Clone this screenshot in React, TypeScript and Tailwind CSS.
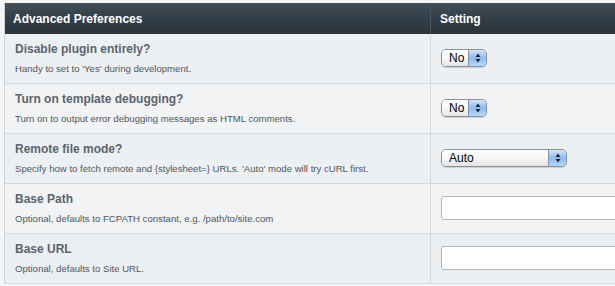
import React from "react";

interface IPrefRow {
    title: string,
    description: string,
    control: "yesno" | "auto" | "text",
    value?: string,
    shade: string
}

const rows: IPrefRow[] = [
    { title: "Disable plugin entirely?", description: "Handy to set to 'Yes' during development.", control: "yesno", value: "No", shade: "bg-[#edf0f2]" },
    { title: "Turn on template debugging?", description: "Turn on to output error debugging messages as HTML comments.", control: "yesno", value: "No", shade: "bg-[#f1f3f4]" },
    { title: "Remote file mode?", description: "Specify how to fetch remote and {stylesheet=} URLs. 'Auto' mode will try cURL first.", control: "auto", value: "Auto", shade: "bg-[#edf0f2]" },
    { title: "Base Path", description: "Optional, defaults to FCPATH constant, e.g. /path/to/site.com", control: "text", shade: "bg-[#f1f3f4]" },
    { title: "Base URL", description: "Optional, defaults to Site URL.", control: "text", shade: "bg-[#eceff1]" },
];

function SelectBox({ value, width }: { value: string, width: string }) {
    return (
        <div
            className={`${width} h-[18px] flex items-stretch rounded-[5px] border border-[#8d9095] overflow-hidden shadow-[0_1px_1px_rgba(0,0,0,0.15)]`}
        >
            <div className="flex-1 flex items-center pl-[7px] text-[12px] text-black bg-gradient-to-b from-white via-[#f7f7f7] to-[#e4e4e4]">
                {value}
            </div>
            <div className="w-[18px] flex items-center justify-center border-l border-[#7a8fa8] bg-gradient-to-b from-[#d2e4f8] via-[#8dbbef] to-[#b8d6f6]">
                <svg width="6" height="10" viewBox="0 0 6 10">
                    <path d="M3 0.5 L5.5 4 L0.5 4 Z" fill="#1b2530" />
                    <path d="M3 9.5 L5.5 6 L0.5 6 Z" fill="#1b2530" />
                </svg>
            </div>
        </div>
    )
};

export default function App() {
    return (
        <div className="w-[615px] h-[286px] overflow-hidden bg-[#f4f5f6] pt-[3px] pl-[4px] font-['Liberation_Sans',Arial,sans-serif]">
            <div className="w-[680px] border-l border-[#cfd3d6]">
                <div className="grid grid-cols-[426px_1fr] h-[31px] bg-gradient-to-b from-[#434e57] via-[#333f48] to-[#29343c] text-white text-[12px] font-bold">
                    <div className="pl-[8px] pt-[7px] border-r border-[#4a565f]">Advanced Preferences</div>
                    <div className="pl-[9px] pt-[7px]">Setting</div>
                </div>
                {rows.map((row) => (
                    <div
                        key={row.title}
                        className={`grid grid-cols-[426px_1fr] h-[50px] border-b border-[#d6d9dc] ${row.shade}`}
                    >
                        <div className="pl-[10px] pt-[8px] border-r border-[#d6d9dc]">
                            <div className="text-[12px] font-bold text-[#5b646c] leading-[14px]">{row.title}</div>
                            <div className="mt-[7px] text-[9.6px] text-[#50575d] leading-[12px]">{row.description}</div>
                        </div>
                        <div className="flex items-center pl-[10px] pb-[2px]">
                            {row.control === "yesno" && <SelectBox value={row.value ?? ""} width="w-[46px]" />}
                            {row.control === "auto" && <SelectBox value={row.value ?? ""} width="w-[126px]" />}
                            {row.control === "text" && (
                                <input
                                    type="text"
                                    className="w-[240px] h-[24px] bg-white border border-[#b3b6b9] rounded-[3px] outline-none"
                                />
                            )}
                        </div>
                    </div>
                ))}
            </div>
        </div>
    )
};
